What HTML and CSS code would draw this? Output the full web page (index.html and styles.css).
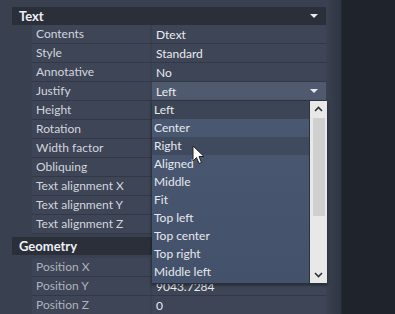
FILE: index.html
```html
<!DOCTYPE html>
<html lang="en">
<head>
    <meta charset="UTF-8">
    <title>Properties</title>
    <link rel="stylesheet" href="styles.css">
</head>
<body>
    <div class="palette">
        <div class="panel">
            <!-- Text section -->
            <div class="section-head">
                <span>Text</span>
                <span class="tri"></span>
            </div>
            <div class="row"><div class="label">Contents</div><div class="value">Dtext</div></div>
            <div class="row"><div class="label">Style</div><div class="value">Standard</div></div>
            <div class="row"><div class="label">Annotative</div><div class="value">No</div></div>
            <div class="row"><div class="label">Justify</div><div class="value active">Left<span class="tri"></span></div></div>
            <div class="row"><div class="label">Height</div><div class="value"></div></div>
            <div class="row"><div class="label">Rotation</div><div class="value"></div></div>
            <div class="row"><div class="label">Width factor</div><div class="value"></div></div>
            <div class="row"><div class="label">Obliquing</div><div class="value"></div></div>
            <div class="row"><div class="label">Text alignment X</div><div class="value"></div></div>
            <div class="row"><div class="label">Text alignment Y</div><div class="value"></div></div>
            <div class="row"><div class="label">Text alignment Z</div><div class="value"></div></div>

            <!-- Geometry section -->
            <div class="section-head geo">
                <span>Geometry</span>
            </div>
            <div class="row"><div class="label dim">Position X</div><div class="value"></div></div>
            <div class="row"><div class="label dim">Position Y</div><div class="value">9043.7284</div></div>
            <div class="row"><div class="label dim">Position Z</div><div class="value">0</div></div>

            <!-- open Justify list -->
            <div class="dropdown">
                <ul class="options">
                    <li class="sel">Left</li>
                    <li>Center</li>
                    <li class="hover">Right</li>
                    <li>Aligned</li>
                    <li>Middle</li>
                    <li>Fit</li>
                    <li>Top left</li>
                    <li>Top center</li>
                    <li>Top right</li>
                    <li>Middle left</li>
                </ul>
                <div class="scrollbar">
                    <svg class="arrow" width="17" height="17" viewBox="0 0 17 17"><path d="M5 10 L8.5 6.5 L12 10" fill="none" stroke="#333" stroke-width="1.6"/></svg>
                    <div class="track"><div class="thumb"></div></div>
                    <svg class="arrow" width="17" height="17" viewBox="0 0 17 17"><path d="M5 7 L8.5 10.5 L12 7" fill="none" stroke="#333" stroke-width="1.6"/></svg>
                </div>
            </div>

            <svg class="cursor" width="14" height="20" viewBox="0 0 14 20">
                <path d="M1 1 L1 16 L4.5 12.5 L7 18.5 L9.5 17.5 L7 11.5 L12 11.5 Z" fill="#ffffff" stroke="#222" stroke-width="1"/>
            </svg>
        </div>
        <div class="edge"></div>
    </div>
</body>
</html>
```

FILE: styles.css
```css
body {
    margin: 0;
    background: #1e232c;
    font-family: Lato, "Open Sans", sans-serif;
    font-size: 12px;
}
.palette {
    display: flex;
    height: 314px;
}
.panel {
    position: relative;
    width: 326px;
    background: #394050;
    padding-top: 7px;
}
.edge {
    width: 15px;
    background: linear-gradient(90deg, #3a4150, #2f3542);
    border-right: 1px solid #262b35;
}
.section-head {
    display: flex;
    justify-content: space-between;
    align-items: center;
    height: 18px;
    margin-left: 12px;
    padding: 0 8px 0 7px;
    background: #2a2f3a;
    color: #eef0f4;
    font-weight: bold;
    font-size: 13px;
}
.section-head.geo {
    margin-top: 3px;
    margin-bottom: 3px;
}
.tri {
    width: 0;
    height: 0;
    border-left: 4px solid transparent;
    border-right: 4px solid transparent;
    border-top: 4px solid #e8eaee;
}
.row {
    display: flex;
    height: 18px;
    margin-left: 32px;
    border-bottom: 1px solid #323845;
}
.label {
    width: 114px;
    padding-left: 4px;
    margin-right: 2px;
    background: #3e4556;
    color: #d3d6de;
    line-height: 18px;
    white-space: nowrap;
}
.label.dim {
    color: #aeb3bd;
}
.value {
    flex: 1;
    display: flex;
    justify-content: space-between;
    align-items: center;
    padding: 0 8px 0 4px;
    background: #3e4556;
    color: #e9ebf0;
}
.value.active {
    background: #505a6e;
}
.dropdown {
    position: absolute;
    left: 152px;
    top: 101px;
    width: 175px;
    height: 182px;
    display: flex;
    background: linear-gradient(180deg, #4b5871, #44516a);
    box-shadow: 0 1px 3px rgba(0, 0, 0, 0.5);
    border-bottom: 1px solid #2a303c;
}
.options {
    list-style: none;
    margin: 0;
    padding: 0;
    flex: 1;
}
.options li {
    height: 18px;
    line-height: 18px;
    padding-left: 2px;
    color: #e6e9ef;
}
.options li.sel {
    background: #3c4556;
}
.options li.hover {
    background: #404a5e;
}
.scrollbar {
    width: 17px;
    display: flex;
    flex-direction: column;
    background: #e8e8e8;
    border-left: 1px solid #2c3240;
}
.arrow {
    display: block;
}
.track {
    flex: 1;
    display: flex;
    justify-content: center;
}
.thumb {
    width: 12px;
    height: 98px;
    background: #cfcfcf;
}
.cursor {
    position: absolute;
    left: 192px;
    top: 145px;
}
```
